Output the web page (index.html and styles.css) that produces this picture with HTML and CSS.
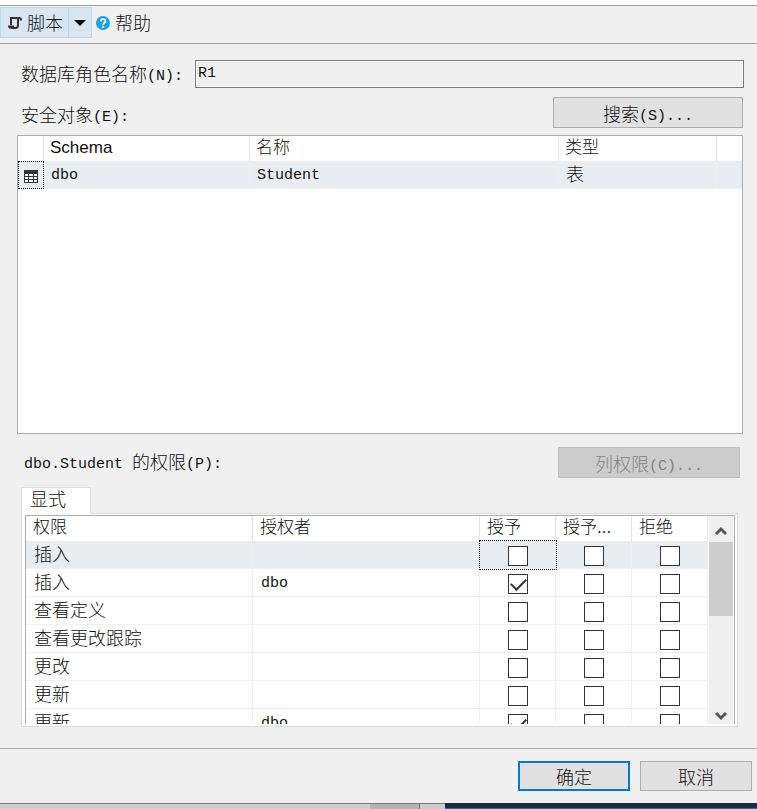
FILE: index.html
```html
<!DOCTYPE html>
<html lang="zh-CN">
<head>
<meta charset="utf-8">
<title>数据库角色属性</title>
<link rel="stylesheet" href="styles.css">
</head>
<body>
<main class="dialog">
  <nav class="toolbar">
    <div class="split">
      <button class="tool" type="button">
        <svg width="16" height="14" viewBox="0 0 16 14" fill="none" stroke="#333" stroke-width="2"><path d="M4 9V2h8.500c1 0 1.500.5 1.500 2.500M11 2v7c0 2-.5 3-2.500 3H4"/><path d="M1 10.500h6M2 11.500h5"/></svg>
        <span>脚本</span>
      </button>
      <button class="drop" type="button" aria-label="更多"><svg width="12" height="6" viewBox="0 0 12 6"><path d="M0 0h12L6 6z"/></svg></button>
    </div>
    <button class="tool help" type="button">
      <svg width="14" height="14" viewBox="0 0 14 14"><circle cx="7" cy="7" r="7" fill="#1ba1e2"/><path d="M4.800 5.400c0-3 4.600-2.800 4.600-.2C9.400 7 7.200 6.800 7.200 8.700" fill="none" stroke="#fff" stroke-width="1.800"/><path d="M6.200 9.800h2v2h-2z" fill="#fff"/></svg>
      <span>帮助</span>
    </button>
  </nav>

  <div class="content">
    <div class="field">
      <label for="role">数据库角色名称<span class="latin">(N):</span></label>
      <input class="role latin" id="role" type="text" value="R1" readonly>
    </div>
    <div class="heading">
      <span>安全对象<span class="latin">(E):</span></span>
      <button class="btn search" type="button">搜索<span class="latin">(S)...</span></button>
    </div>
    <div class="securables">
      <table>
        <colgroup><col class="c-icon"><col class="c-schema"><col><col class="c-type"><col class="c-rest"></colgroup>
        <thead><tr><th></th><th>Schema</th><th>名称</th><th>类型</th><th></th></tr></thead>
        <tbody>
          <tr class="selected">
            <td class="focus icon-cell"><svg width="14" height="13" viewBox="0 0 14 13"><path fill="#333" d="M0 0h14v13H0z"/><path fill="#fff" d="M1 4h3v2H1zM5 4h4v2H5zM10 4h3v2h-3zM1 7h3v2H1zM5 7h4v2H5zM10 7h3v2h-3zM1 10h3v2H1zM5 10h4v2H5zM10 10h3v2h-3z"/></svg></td>
            <td class="latin">dbo</td><td class="latin">Student</td><td>表</td><td></td>
          </tr>
        </tbody>
      </table>
    </div>
    <div class="heading perm-heading">
      <span><span class="latin">dbo.Student </span>的权限<span class="latin">(P):</span></span>
      <button class="btn column" type="button" disabled>列权限<span class="latin">(C)...</span></button>
    </div>
    <section class="tabs">
      <button class="tab" type="button">显式</button>
      <div class="panel">
        <div class="grid">
          <table class="perms">
            <colgroup><col><col><col class="c-check"><col class="c-check"><col class="c-check"></colgroup>
            <thead><tr><th>权限</th><th>授权者</th><th>授予</th><th>授予...</th><th>拒绝</th></tr></thead>
            <tbody>
              <tr class="selected"><td>插入</td><td></td><td class="focus"><input type="checkbox" aria-label="授予"></td><td><input type="checkbox" aria-label="具有授予选项"></td><td><input type="checkbox" aria-label="拒绝"></td></tr>
              <tr><td>插入</td><td class="latin">dbo</td><td><input type="checkbox" aria-label="授予" checked></td><td><input type="checkbox" aria-label="具有授予选项"></td><td><input type="checkbox" aria-label="拒绝"></td></tr>
              <tr><td>查看定义</td><td></td><td><input type="checkbox" aria-label="授予"></td><td><input type="checkbox" aria-label="具有授予选项"></td><td><input type="checkbox" aria-label="拒绝"></td></tr>
              <tr><td>查看更改跟踪</td><td></td><td><input type="checkbox" aria-label="授予"></td><td><input type="checkbox" aria-label="具有授予选项"></td><td><input type="checkbox" aria-label="拒绝"></td></tr>
              <tr><td>更改</td><td></td><td><input type="checkbox" aria-label="授予"></td><td><input type="checkbox" aria-label="具有授予选项"></td><td><input type="checkbox" aria-label="拒绝"></td></tr>
              <tr><td>更新</td><td></td><td><input type="checkbox" aria-label="授予"></td><td><input type="checkbox" aria-label="具有授予选项"></td><td><input type="checkbox" aria-label="拒绝"></td></tr>
              <tr><td>更新</td><td class="latin">dbo</td><td><input type="checkbox" aria-label="授予" checked></td><td><input type="checkbox" aria-label="具有授予选项"></td><td><input type="checkbox" aria-label="拒绝"></td></tr>
            </tbody>
          </table>
          <div class="scrollbar">
            <button type="button" aria-label="向上滚动"><svg width="12" height="10" viewBox="0 0 12 10"><path d="M1 8l5-5 5 5" fill="none" stroke="#555" stroke-width="3"/></svg></button>
            <div class="thumb"></div>
            <button class="down" type="button" aria-label="向下滚动"><svg width="12" height="10" viewBox="0 0 12 10"><path d="M1 2l5 5 5-5" fill="none" stroke="#555" stroke-width="3"/></svg></button>
          </div>
        </div>
      </div>
    </section>
  </div>

  <footer class="actions">
    <button class="btn primary" type="button">确定</button>
    <button class="btn" type="button">取消</button>
  </footer>
</main>
<div class="desktop"><div class="window-edge"></div><div class="window-shade"></div><div class="window-gap"></div><div class="taskbar"></div></div>
</body>
</html>
```
FILE: styles.css
```css
* { box-sizing: border-box; }
body {
  margin: 0;
  min-height: 100vh;
  display: flex;
  flex-direction: column;
  background: #f0f0f0;
  color: #111;
  font: 300 18px/24px "Noto Sans CJK SC", sans-serif;
}
button, input { font: inherit; color: inherit; margin: 0; }
button { padding: 0; border: 0; background: none; }
svg { display: block; }
.latin { font-family: "Liberation Mono", monospace; font-size: 15px; line-height: 16px; white-space: pre; }
span.latin { vertical-align: 1px; }

.dialog { flex: 1; border-top: 5px solid #fff; }
.toolbar {
  display: flex;
  height: 39px;
  padding-top: 1px;
  border-top: 1px solid #a0a0a0;
  border-bottom: 1px solid #a0a0a0;
}
.split { display: flex; height: 31px; border: 1px solid #b8d8f0; background: #d9e6f1; }
.tool { display: flex; align-items: center; gap: 4px; padding: 0 5px 0 6px; }
.tool span { padding-bottom: 2px; }
.drop { width: 23px; padding-left: 5px; border-left: 1px solid #b8d8f0; }
.help { height: 31px; padding-left: 4px; gap: 5px; }

.content { padding: 16px 13px 21px 17px; }
.field { display: flex; align-items: center; }
.field label { width: 178px; padding: 0 0 3px 4px; white-space: nowrap; }
.role {
  flex: 1;
  min-width: 0;
  height: 28px;
  padding: 0 2px 2px;
  border: 1px solid #7a7a7a;
  background: #f0f0f0;
  box-shadow: inset 0 0 0 1px #fff;
}
.heading {
  display: flex;
  align-items: flex-start;
  justify-content: space-between;
  height: 36px;
  margin: 9px 1px 0 0;
  padding-left: 4px;
  line-height: 34px;
}
.btn {
  width: 112px;
  height: 31px;
  line-height: 24px;
  border: 1px solid #adadad;
  background: #e1e1e1;
}
.search { width: 190px; }
.column { width: 182px; background: #ccc; border-color: #bfbfbf; color: #838383; }

.securables { height: 299px; margin: 2px 1px 0 0; border: 1px solid #abadb3; background: #fff; }
table { width: 100%; border-collapse: separate; border-spacing: 0; table-layout: fixed; }
.c-icon { width: 26px; }
.c-schema { width: 206px; }
.c-type { width: 158px; }
.c-rest { width: 25px; }
.c-check { width: 76px; }
th {
  height: 25px;
  padding: 0 0 2px 7px;
  border-right: 1px solid #e5e5e5;
  font: 300 17px/22px "Liberation Sans", "Noto Sans CJK SC", sans-serif;
  text-align: left;
  white-space: nowrap;
}
td {
  height: 28px;
  padding: 0 0 4px 8px;
  border-right: 1px solid #f0f0f0;
  border-bottom: 1px solid #f0f0f0;
  line-height: 22px;
}
td.latin { padding: 2px 0 0 8px; }
.securables th { padding-left: 6px; }
.securables td { padding-left: 7px; }
.securables th:last-child, .securables td:last-child { border-right: 0; }
.selected td { background: #e8edf1; }
td.focus { outline: 1px dotted #000; }
.securables .icon-cell { padding: 3px 0 0 6px; outline-offset: -1px; }

.perm-heading { height: 31px; margin-top: 13px; padding: 0 3px 0 7px; line-height: 28px; }
.tabs { margin: 9px 6px 0 4px; }
.tab {
  display: block;
  position: relative;
  width: 70px;
  height: 27px;
  margin-bottom: -1px;
  padding: 0 0 6px 8px;
  border: 1px solid #dcdcdc;
  border-bottom: 0;
  background: #fff;
  line-height: 20px;
  text-align: left;
}
.panel { height: 214px; padding: 1px 2px 2px 3px; border: 1px solid #dcdcdc; background: #fff; }
.grid { display: flex; height: 209px; overflow: hidden; border: 1px solid #abadb3; border-bottom: 0; }
.perms { flex: 1; align-self: flex-start; }
td:has(input) { padding: 2px 0 0 28px; }
input[type="checkbox"] {
  appearance: none;
  display: block;
  width: 20px;
  height: 20px;
  border: 1px solid #333;
  background: #fff;
}
input[type="checkbox"]:checked::before {
  content: "";
  display: block;
  width: 13px;
  height: 7px;
  margin: 3px 0 0 2px;
  border: solid #333;
  border-width: 0 0 2px 2px;
  transform: rotate(-45deg);
}
.scrollbar { display: flex; flex-direction: column; width: 24px; margin: 0 1px; background: #f0f0f0; }
.scrollbar button { height: 26px; padding: 4px 0 0 6px; }
.thumb { height: 74px; background: #cdcdcd; }
.scrollbar .down { height: 16px; margin-top: auto; padding: 0 0 0 6px; }

.actions { display: flex; justify-content: flex-end; gap: 10px; padding: 12px 5px 12px; border-top: 1px solid #abadb3; }
.actions .btn { height: 30px; padding-bottom: 1px; }
.actions .primary { border: 2px solid #0078d7; }
.desktop { display: flex; height: 6px; }
.window-edge { flex: 370; border-top: 1px solid #777; background: #d0d0d0; }
.window-shade { flex: 50; border-top: 1px solid #777; border-right: 1px solid #777; background: #b4b4b4; }
.window-gap { flex: 25; border-top: 1px solid #777; background: #ccc; }
.taskbar { flex: 312; border-bottom: 1px solid #0078d7; background: #1e2b3f; }
```
